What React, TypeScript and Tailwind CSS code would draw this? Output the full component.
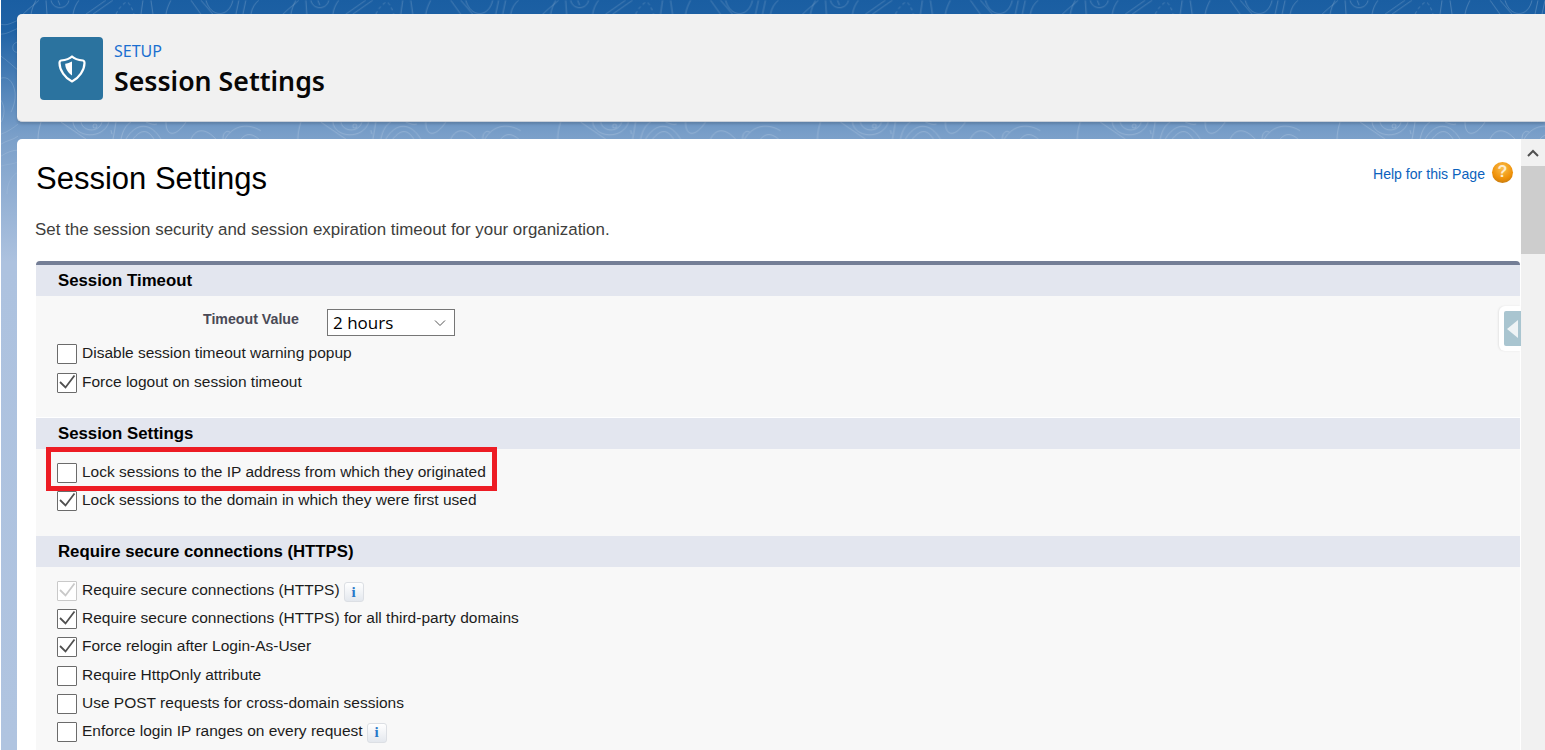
import type { ReactNode } from "react";

const sans = "font-['Liberation_Sans',Arial,sans-serif]";

function Checkbox({ checked, disabled }: { checked?: boolean; disabled?: boolean }) {
  return (
    <span
      className={`flex h-[20px] w-[20px] shrink-0 items-center justify-center rounded-[1px] border bg-white ${
        disabled ? "border-[#c9c9c9]" : "border-[#6b6b6b]"
      }`}
    >
      {checked && (
        <svg viewBox="0 0 18 18" className="h-[18px] w-[18px]">
          <path
            d="M2 8 L7.500 13.500 L16.500 1.500"
            fill="none"
            stroke={disabled ? "#c9c9c9" : "#505050"}
            strokeWidth="1.8"
          />
        </svg>
      )}
    </span>
  );
}

function InfoButton() {
  return (
    <span className="ml-[-1px] mt-[6px] flex h-[20px] w-[20px] items-center justify-center rounded-[3px] border border-[#dcdfe4] bg-gradient-to-b from-white to-[#e4e8ee] font-['Liberation_Serif',serif] text-[15px] font-bold leading-none text-[#2a79c9]">
      i
    </span>
  );
}

function Row({ label, checked, disabled, info }: { label: string; checked?: boolean; disabled?: boolean; info?: boolean }) {
  return (
    <div className="flex h-[28.2px] items-start gap-[5px]">
      <div className="mt-[5px]">
        <Checkbox checked={checked} disabled={disabled} />
      </div>
      <span className="text-[15.5px] leading-[27px] text-[#1c1c1c]">{label}</span>
      {info && <InfoButton />}
    </div>
  );
}

function SectionHead({ children }: { children: ReactNode }) {
  return (
    <div className="flex h-[31px] items-center bg-[#e3e6ef] pl-[22px] text-[16.8px] font-bold text-black">
      {children}
    </div>
  );
}

// contour lines repeat every 260px, only the strips between the cards show them
function Topography() {
  return (
    <svg className="absolute inset-0 h-full w-full" viewBox="0 0 1545 750">
      <defs>
        <pattern id="contours" width="260" height="160" patternUnits="userSpaceOnUse">
          <g fill="none" stroke="#ffffff" strokeOpacity="0.2" strokeWidth="1">
            {/* top strip */}
            <path d="M22 14 C28 8 34 4 38 0 M30 14 C31 8 33 4 35 0 M45 0 L46 14 M50 0 C52 10 66 10 68 0 M57 0 L59 5" />
            <path d="M72 14 C73 8 75 4 78 0 M85 14 L105 0 M92 14 L112 0 M140 14 L142 0 M150 0 L152 14 M165 14 C166 8 168 4 170 0" />
            <path d="M115 14 C118 8 122 3 126 2 C129 3 131 8 133 14" strokeDasharray="3 3" />
            <path d="M190 0 L200 14 M200 0 L212 14 M205 0 C210 18 228 18 232 0 M235 14 L238 0 M242 14 L245 0 M250 14 C251 8 254 3 258 0" />
            {/* strip under the header */}
            <path d="M40 122 C38 128 37 134 37 139 M60 122 L85 139 M72 122 C74 138 102 140 108 122 M80 122 C82 132 98 133 101 122" />
            <circle cx="94" cy="126" r="2" />
            <path d="M110 130 L111 134 M115 122 C114 128 113 134 112 139 M120 139 C122 130 125 125 130 122" />
            <path d="M125 139 C135 122 150 122 160 139 M132 139 C140 129 147 129 153 139 M145 122 C150 124 153 125 156 124" />
            <path d="M165 122 C165 137 175 137 185 122 M190 139 C195 128 205 128 215 139" />
            <path d="M222 139 C222 132 226 130 229 132 M224 139 C232 125 248 122 262 132 M240 139 C246 132 252 134 258 139" />
          </g>
        </pattern>
      </defs>
      <rect x="0" y="0" width="1545" height="160" fill="url(#contours)" />
      <g fill="none" stroke="#ffffff" strokeWidth="1">
        <path d="M0 24 C6 26 12 22 17 20 M0 34 C6 34 12 30 17 28" strokeOpacity="0.16" />
        <path d="M17 42 C10 42 10 53 17 52 M0 56 C6 60 12 66 17 70" strokeOpacity="0.16" />
        <path d="M0 78 C6 76 12 80 14 92 C15 100 12 108 10 112 M0 100 C4 106 4 116 0 122" strokeOpacity="0.16" />
        <path d="M0 134 C6 132 12 128 17 124 M0 144 C6 140 12 140 17 136 M0 156 C6 152 12 150 17 150" strokeOpacity="0.13" />
        <path d="M0 166 C6 164 12 164 17 162 M17 172 C10 176 6 184 6 194" strokeOpacity="0.08" />
      </g>
    </svg>
  );
}

export default function App() {
  return (
    <div className={`relative h-[750px] w-full overflow-hidden border-l border-white bg-[linear-gradient(180deg,#1a5ea2_0%,#1f62a5_4%,#7a9fc9_18%,#adc2df_35%,#b0c4e0_100%)] ${sans}`}>
      <Topography />
      <div className="relative flex h-full flex-col pl-[16px] pt-[14px]">
        {/* Page header */}
        <div className="flex h-[108px] shrink-0 items-center gap-[11px] rounded-l-[5px] border-b border-[#c9cfd8] bg-[#f1f1f1] pl-[23px] shadow-[0_2px_3px_rgba(0,0,0,0.16)]">
          <div className="mt-[2px] flex h-[63px] w-[63px] items-center justify-center rounded-[4px] bg-[#2b739f]">
            <svg viewBox="0 0 28 28" className="h-[28px] w-[28px]">
              <path
                d="M14 1.500 C16 3.500 20 5 25 5.500 C26.500 5.800 26.500 7 26.500 8 C26.500 15 21 23 14 26.500 C7 23 1.500 15 1.500 8 C1.500 7 1.500 5.800 3 5.500 C8 5 12 3.500 14 1.500 Z"
                fill="none"
                stroke="#fff"
                strokeWidth="2.200"
                strokeLinejoin="round"
              />
              <path d="M14 6.500 C11.500 7.800 9.500 8.500 7.200 8.800 C7.200 13 9.500 17.500 14 20.500 Z" fill="#fff" />
            </svg>
          </div>
          <div className="mt-[4px] font-['Noto_Sans',sans-serif]">
            <div className="text-[16px] leading-[21px] text-[#1b6fd0]">SETUP</div>
            <div className="text-[26.7px] font-semibold leading-[37px] text-[#080707]">Session Settings</div>
          </div>
        </div>

        {/* Main card */}
        <div className="relative mt-[17px] flex min-h-0 flex-1 overflow-hidden rounded-tl-[5px] bg-white">
          <div className="min-w-0 flex-1">
            <div className="flex items-start justify-between pl-[19px] pr-[8px]">
              <h1 className="mt-[21px] text-[31px] leading-[37px] text-black">Session Settings</h1>
              <div className="mt-[21px] flex items-center gap-[7px]">
                <a className="mt-[4px] text-[14.1px] leading-[20px] text-[#0b62bd]">Help for this Page</a>
                <span className="flex h-[21px] w-[21px] items-center justify-center rounded-full bg-[radial-gradient(circle_at_50%_30%,#fbbf4d,#ee8f06_60%,#a9701c)] text-[16px] font-bold leading-none text-[#fdeccd]">
                  ?
                </span>
              </div>
            </div>
            <p className="mt-[23px] pl-[18px] text-[16.9px] leading-[20px] text-[#3e3e3c]">
              Set the session security and session expiration timeout for your organization.
            </p>

            {/* Settings panel */}
            <div className="ml-[19px] mr-[1px] mt-[21px] overflow-hidden rounded-t-[4px] border-t-[4px] border-[#747e96] bg-[#f8f8f8]">
              <SectionHead>Session Timeout</SectionHead>
              <div className="h-[121px] pl-[21px] pt-[13px]">
                <div className="flex h-[27px] items-start">
                  <span className="ml-[146px] mt-[2px] w-[97px] whitespace-nowrap text-[14.2px] font-bold leading-[16px] text-[#4a4a56]">Timeout Value</span>
                  <span className="ml-[27px] flex h-[27px] w-[128px] items-center justify-between border border-[#767676] bg-white pl-[5px] pr-[8px] font-['Open_Sans',sans-serif] text-[17px] leading-none text-black">
                    2 hours
                    <svg viewBox="0 0 12 8" className="h-[8px] w-[12px]">
                      <path d="M1 1.500 L6 6.500 L11 1.500" fill="none" stroke="#555" strokeWidth="1" />
                    </svg>
                  </span>
                </div>
                <div className="mt-[3px]">
                  <Row label="Disable session timeout warning popup" />
                  <div className="mt-[1px]">
                    <Row label="Force logout on session timeout" checked />
                  </div>
                </div>
              </div>

              <div className="border-t border-white">
                <SectionHead>Session Settings</SectionHead>
              </div>
              <div className="h-[87px] pl-[21px] pt-[9px]">
                <Row label="Lock sessions to the IP address from which they originated" />
                <Row label="Lock sessions to the domain in which they were first used" checked />
              </div>

              <SectionHead>Require secure connections (HTTPS)</SectionHead>
              <div className="h-[200px] pl-[21px] pt-[9px]">
                <Row label="Require secure connections (HTTPS)" checked disabled info />
                <Row label="Require secure connections (HTTPS) for all third-party domains" checked />
                <Row label="Force relogin after Login-As-User" checked />
                <Row label="Require HttpOnly attribute" />
                <Row label="Use POST requests for cross-domain sessions" />
                <Row label="Enforce login IP ranges on every request" info />
              </div>
            </div>
          </div>

          {/* Scrollbar */}
          <div className="flex w-[24px] shrink-0 flex-col bg-[#f1f1f1]">
            <div className="flex h-[27px] items-center justify-center">
              <svg viewBox="0 0 12 8" className="h-[8px] w-[12px]">
                <path d="M1 7 L6 2 L11 7" fill="none" stroke="#505050" strokeWidth="2" />
              </svg>
            </div>
            <div className="h-[88px] bg-[#cdcdcd]" />
          </div>

          {/* Sidebar collapse handle */}
          <div className="absolute right-[24px] top-[167px] flex h-[45px] w-[22px] items-center rounded-l-[6px] bg-white pl-[5px] shadow-[-1px_0_2px_rgba(0,0,0,0.08)]">
            <div className="flex h-[35px] w-[17px] items-center justify-center rounded-l-[2px] bg-[#a9c5d0]">
              <span className="h-0 w-0 border-y-[9px] border-r-[11px] border-y-transparent border-r-[#eef3f5]" />
            </div>
          </div>
        </div>
      </div>

      {/* Red highlight added on the screenshot */}
      <div className="absolute left-[45px] top-[447px] h-[44px] w-[451px] border-[5px] border-[#ed1c24]" />
    </div>
  );
}
